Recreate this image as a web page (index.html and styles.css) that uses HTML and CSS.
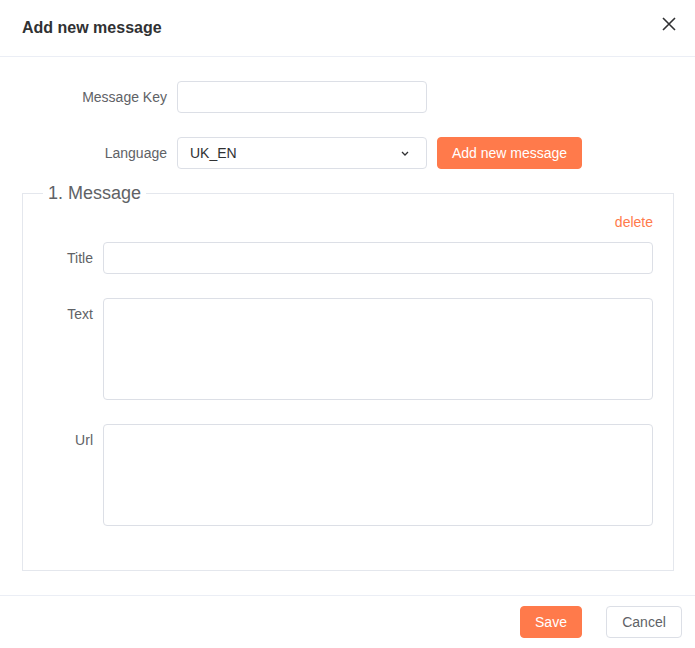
FILE: index.html
```html
<!DOCTYPE html>
<html>
<head>
<meta charset="utf-8">
<link rel="stylesheet" href="styles.css">
</head>
<body>
<div class="dialog">
  <div class="dialog-header">
    <span class="dialog-title">Add new message</span>
    <span class="close-btn">
      <svg width="14" height="14" viewBox="0 0 14 14"><path d="M1 1 L13 13 M13 1 L1 13" stroke="#303133" stroke-width="1.6" fill="none"/></svg>
    </span>
  </div>
  <div class="dialog-body">
    <div class="form-row">
      <label class="row-label">Message Key</label>
      <input class="text-input key-input" type="text">
    </div>
    <div class="form-row">
      <label class="row-label">Language</label>
      <div class="select">
        <span>UK_EN</span>
        <svg class="chevron" width="8" height="5" viewBox="0 0 8 5"><path d="M1 1 L4 4 L7 1" stroke="#303133" stroke-width="1.3" fill="none"/></svg>
      </div>
      <button class="btn btn-primary add-btn">Add new message</button>
    </div>
    <fieldset class="message-box">
      <legend>1. Message</legend>
      <div class="delete-row"><a class="delete-link">delete</a></div>
      <div class="field-row">
        <label class="field-label">Title</label>
        <input class="text-input grow" type="text">
      </div>
      <div class="field-row">
        <label class="field-label">Text</label>
        <textarea class="text-area grow"></textarea>
      </div>
      <div class="field-row">
        <label class="field-label">Url</label>
        <textarea class="text-area grow"></textarea>
      </div>
    </fieldset>
  </div>
  <div class="dialog-footer">
    <button class="btn btn-primary save-btn">Save</button>
    <button class="btn btn-default cancel-btn">Cancel</button>
  </div>
</div>
</body>
</html>
```
FILE: styles.css
```css
* { box-sizing: border-box; }
html, body { margin: 0; padding: 0; background: #fff; }
body {
  font-family: "Liberation Sans", Arial, sans-serif;
  font-size: 14px;
  color: #606266;
}
.dialog { width: 695px; height: 648px; background: #fff; }
.dialog-header {
  height: 57px;
  border-bottom: 1px solid #ebeef5;
  display: flex;
  align-items: center;
  justify-content: space-between;
  padding: 0 19px 0 22px;
}
.dialog-title { font-size: 16px; font-weight: bold; color: #303133; }
.close-btn { display: flex; width: 14px; height: 14px; margin-top: -8px; }
.dialog-body { padding: 24px 21px 0 22px; }
.form-row { display: flex; align-items: center; height: 32px; margin-bottom: 24px; }
.form-row:nth-child(2) { margin-bottom: 14px; }
.row-label { width: 155px; padding-right: 10px; text-align: right; line-height: 32px; color: #606266; }
.text-input {
  height: 32px;
  border: 1px solid #dcdfe6;
  border-radius: 4px;
  outline: none;
  font-family: inherit;
  font-size: 14px;
  padding: 0 12px;
  background: #fff;
}
.key-input { width: 250px; }
.select {
  width: 250px;
  height: 32px;
  border: 1px solid #dcdfe6;
  border-radius: 4px;
  display: flex;
  align-items: center;
  justify-content: space-between;
  padding: 0 17px 0 12px;
  color: #303133;
}
.chevron { margin-top: 1px; }
.btn {
  height: 32px;
  border-radius: 4px;
  font-family: inherit;
  font-size: 14px;
  cursor: pointer;
  padding: 0;
}
.btn-primary { background: #ff7a4b; border: 1px solid #ff7a4b; color: #fff; }
.btn-default { background: #fff; border: 1px solid #dcdfe6; color: #606266; }
.add-btn { width: 145px; margin-left: 10px; }
.message-box {
  margin: 0;
  width: 652px;
  border: 1px solid #e4e7ed;
  padding: 9px 20px 44px 20px;
}
.message-box legend {
  font-size: 18px;
  line-height: 20px;
  padding: 0 5px;
  color: #606266;
}
.delete-row { display: flex; justify-content: flex-end; line-height: 20px; margin-bottom: 10px; }
.delete-link { color: #ff7a4b; font-size: 14px; }
.field-row { display: flex; align-items: flex-start; margin-bottom: 24px; }
.field-row:last-child { margin-bottom: 0; }
.field-label { width: 60px; padding-right: 10px; text-align: right; line-height: 32px; color: #606266; }
.grow { flex: 1; }
.text-area {
  height: 102px;
  resize: none;
  border: 1px solid #dcdfe6;
  border-radius: 4px;
  outline: none;
  font-family: inherit;
  font-size: 14px;
  padding: 5px 12px;
  display: block;
}
.dialog-footer {
  margin-top: 24px;
  border-top: 1px solid #ebeef5;
  padding: 10px 13px 0 0;
  display: flex;
  justify-content: flex-end;
  gap: 24px;
}
.save-btn { width: 62px; }
.cancel-btn { width: 76px; }
```
